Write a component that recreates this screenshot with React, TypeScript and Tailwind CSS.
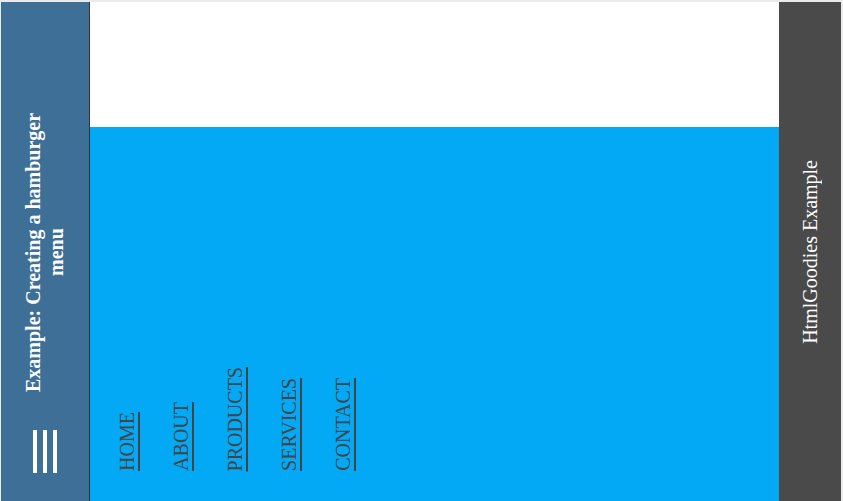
import React from "react";

const links = ["HOME", "ABOUT", "PRODUCTS", "SERVICES", "CONTACT"];

export default function App() {
  return (
    <div
      className="flex h-[501px] w-[843px] overflow-hidden border-t-2 border-l border-r-2 border-[#ebebeb] bg-white"
      style={{ fontFamily: '"Liberation Serif", "Times New Roman", serif' }}
    >
      <aside className="grid w-[89px] shrink-0 grid-rows-[1fr_auto_1fr] border-r border-[#333333] bg-[#3e6f96]">
        <div />
        <div className="flex justify-center">
          <h2 className="h-[300px] rotate-180 text-center text-[20px] font-bold leading-[23px] text-white [writing-mode:vertical-rl]">
            Example: Creating a hamburger menu
          </h2>
        </div>
        <div className="flex items-end justify-center pb-[28px] pr-[1px]">
          <div className="flex h-[43px] gap-[6px]">
            <span className="block h-full w-[4px] bg-white" />
            <span className="block h-full w-[4px] bg-white" />
            <span className="block h-full w-[4px] bg-white" />
          </div>
        </div>
      </aside>

      <main className="flex min-w-0 flex-1 flex-col">
        <div className="h-[125px] shrink-0 bg-white" />
        <nav className="flex flex-1 items-end gap-[31px] bg-[#03a9f4] pb-[30px] pl-[26px]">
          {links.map((l) => (
            <a
              key={l}
              href="#"
              className="rotate-180 text-[20px] leading-[23px] text-[#444444] underline decoration-2 [writing-mode:vertical-rl]"
            >
              {l}
            </a>
          ))}
        </nav>
      </main>

      <aside className="flex w-[62px] shrink-0 items-center justify-center bg-[#4a4a4a]">
        <p className="rotate-180 text-[20px] leading-[23px] text-white [writing-mode:vertical-rl]">
          HtmlGoodies Example
        </p>
      </aside>
    </div>
  );
}
